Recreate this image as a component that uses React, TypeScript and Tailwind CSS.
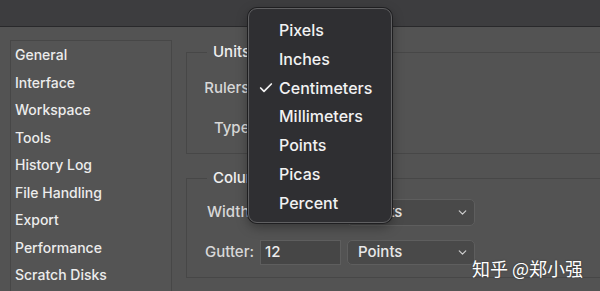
import { Check, ChevronDown } from 'lucide-react'

const panels = [
  'General',
  'Interface',
  'Workspace',
  'Tools',
  'History Log',
  'File Handling',
  'Export',
  'Performance',
  'Scratch Disks',
]

const units = ['Pixels', 'Inches', 'Centimeters', 'Millimeters', 'Points', 'Picas', 'Percent']

function Select({ value }: { value: string }) {
  return (
    <div className="flex h-full w-[128px] items-center justify-between rounded-[5px] border border-[#5e5e5e] bg-[#494949] pl-[10px] pr-[5px] text-[15px] font-medium text-[#e8e8e8]">
      <span>{value}</span>
      <ChevronDown size={13} strokeWidth={2.2} className="text-[#cfcfcf]" />
    </div>
  )
}

export default function App() {
  return (
    <div className="relative h-[291px] w-[600px] overflow-hidden bg-[#535353] font-['Inter','Noto_Sans',sans-serif]">
      <div className="h-[27px] border-b border-[#29292b] bg-[#3d3d3f]" />

      <div className="flex pl-[10px] pt-[13px]">
        <ul className="h-[300px] w-[162px] shrink-0 border border-[#474747] bg-[#545454] pl-[4px] text-[14px] font-medium leading-[27.5px] text-[#ececec]">
          {panels.map((p) => (
            <li key={p}>{p}</li>
          ))}
        </ul>

        <div className="ml-[14px] flex w-[460px] shrink-0 flex-col pt-[3px]">
          <fieldset className="border border-[#474747] pb-[12px]">
            <legend className="ml-[20px] px-[6px] text-[15px] font-medium leading-[18px] text-[#f0f0f0]">Units</legend>
            <div className="mt-[14px] flex h-[26px] items-center">
              <span className="w-[67px] text-right text-[15px] font-medium text-[#d8d8d8]">Rulers:</span>
            </div>
            <div className="mt-[14px] flex h-[26px] items-center">
              <span className="w-[67px] text-right text-[15px] font-medium text-[#d8d8d8]">Type:</span>
            </div>
          </fieldset>

          <fieldset className="mt-[15px] border border-[#474747] pb-[12px]">
            <legend className="ml-[20px] px-[6px] text-[15px] font-medium leading-[18px] text-[#f0f0f0]">Columns</legend>
            <div className="mt-[12px] flex h-[27px] items-center">
              <span className="w-[67px] text-right text-[15px] font-medium text-[#d8d8d8]">Width:</span>
              <div className="ml-[93px] h-full">
                <Select value="Points" />
              </div>
            </div>
            <div className="mt-[14px] flex h-[25px] items-center">
              <span className="w-[67px] text-right text-[15px] font-medium text-[#d8d8d8]">Gutter:</span>
              <div className="ml-[6px] flex h-full w-[81px] items-center border border-[#5e5e5e] bg-[#464646] pl-[4px] text-[15px] font-medium text-[#ececec]">
                12
              </div>
              <div className="ml-[6px] h-full">
                <Select value="Points" />
              </div>
            </div>
          </fieldset>
        </div>
      </div>

      <div className="absolute left-[248px] top-[8px] h-[215px] w-[144px] rounded-[9px] border border-[#606062] bg-[#2f2f32] pt-[7px] shadow-[0_0_0_1px_#1f1f21,0_4px_12px_rgba(0,0,0,0.35)]">
        {units.map((u) => (
          <div key={u} className="relative pl-[30px] text-[16px] font-medium leading-[28.8px] text-[#f2f2f2]">
            {u === 'Centimeters' && (
              <Check size={16} strokeWidth={2.6} className="absolute left-[9px] top-[6px] text-[#f2f2f2]" />
            )}
            {u}
          </div>
        ))}
      </div>

      <div className="absolute left-[472px] top-[255px] font-['Noto_Sans_CJK_SC',sans-serif] text-[18px] leading-[26px] text-white [text-shadow:0_0_2px_rgba(0,0,0,0.4)]">
        知乎 @郑小强
      </div>
    </div>
  )
}
